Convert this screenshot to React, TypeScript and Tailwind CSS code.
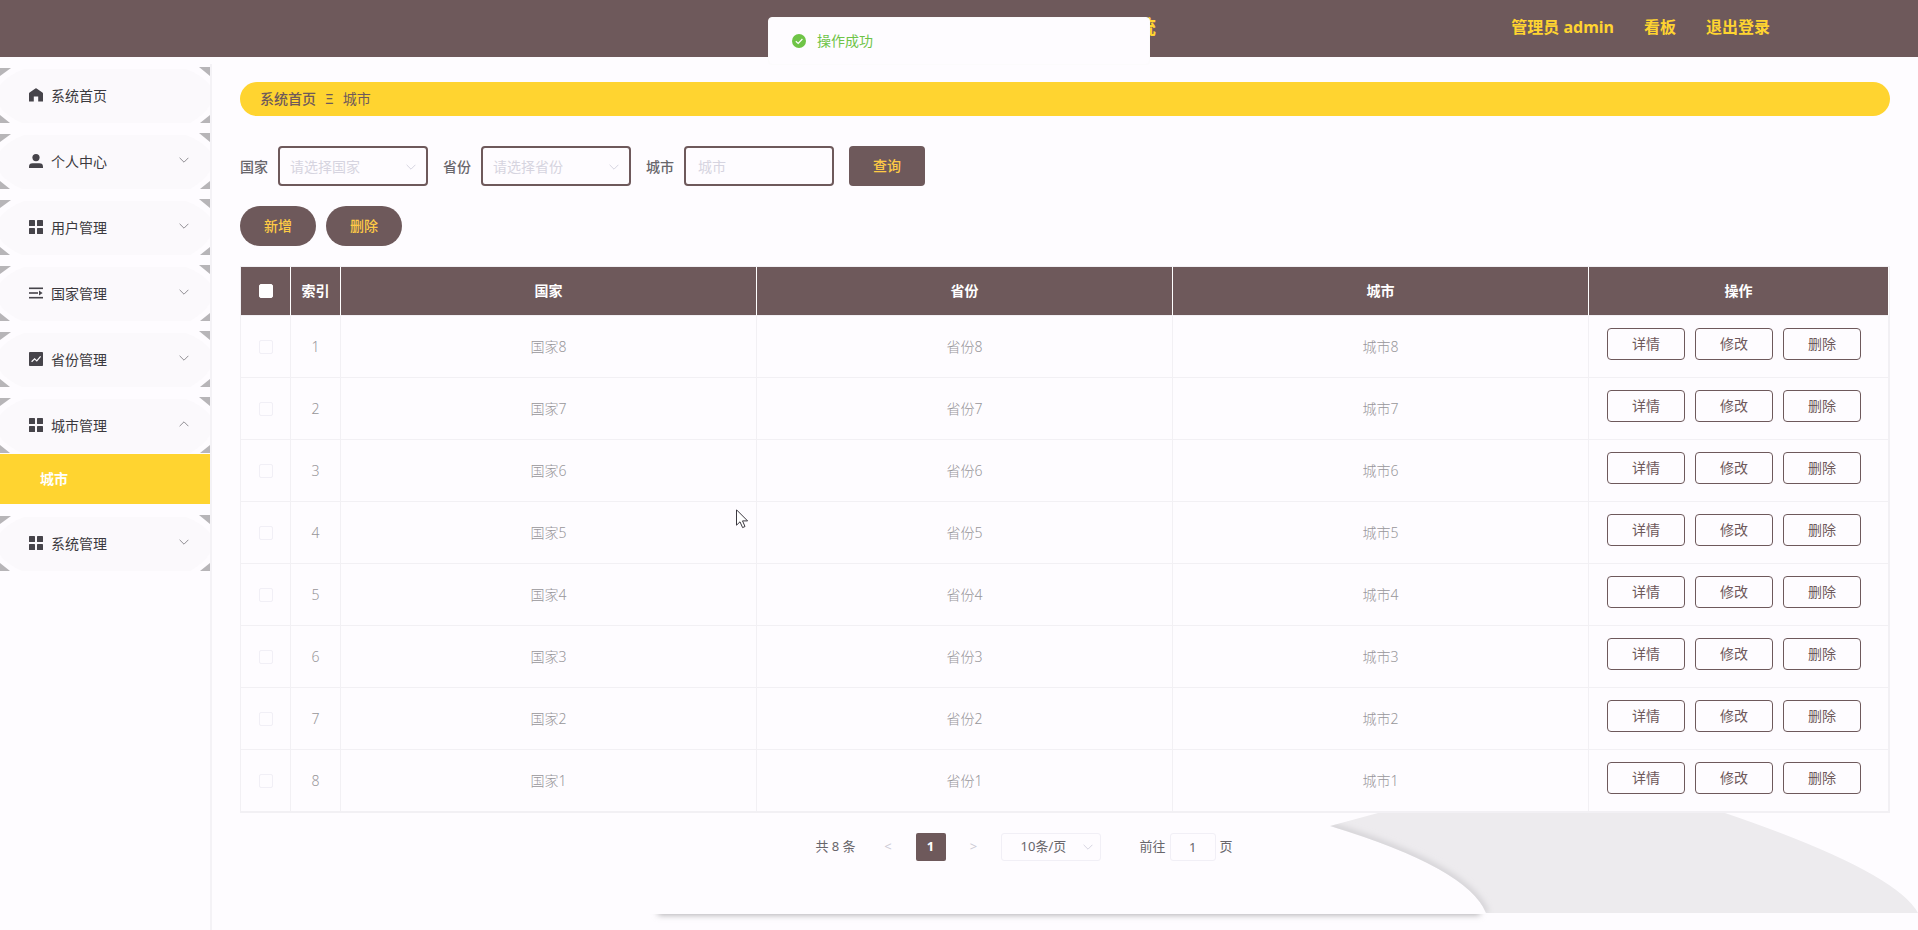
import React from "react";

const FONT = "font-['Noto_Sans','Noto_Sans_CJK_SC',sans-serif]";

type IconName = "home" | "user" | "grid" | "list" | "trend";

function MenuIcon({ name }: { name: IconName }) {
  return (
    <svg viewBox="0 0 14 14" className="size-[14px] shrink-0 fill-[#46444a]" aria-hidden="true">
      {name === "home" && (
        <path d="M6.4 .5Q7 .1 7.6 .5L13.4 4.5Q14 4.9 14 5.6V13.4H9.2V8.6H4.8V13.4H0V5.6Q0 4.9 .6 4.5Z" />
      )}
      {name === "user" && (
        <>
          <circle cx="7" cy="3.6" r="3.6" />
          <path d="M0 14V12.6Q0 9.2 3.6 9.2H10.4Q14 9.2 14 12.6V14Z" />
        </>
      )}
      {name === "grid" && (
        <>
          <rect x="0" y="0" width="6" height="6" rx=".6" />
          <rect x="8" y="0" width="6" height="6" rx=".6" />
          <rect x="0" y="8" width="6" height="6" rx=".6" />
          <rect x="8" y="8" width="6" height="6" rx=".6" />
        </>
      )}
      {name === "list" && (
        <>
          <rect x="0" y="1.5" width="14" height="1.6" />
          <rect x="0" y="6.2" width="9" height="1.6" />
          <path d="M10 4.4L13.6 7L10 9.6Z" />
          <rect x="0" y="10.9" width="14" height="1.6" />
        </>
      )}
      {name === "trend" && (
        <>
          <rect width="14" height="14" rx=".8" />
          <path d="M2.6 9.8L5.6 6.9L7.8 8.9L11.6 4.4" fill="none" stroke="#fefcff" strokeWidth="1.2" />
        </>
      )}
    </svg>
  );
}

function Chevron({ up = false, className = "" }: { up?: boolean; className?: string }) {
  return (
    <svg viewBox="0 0 10 6" className={`h-[6px] w-[10px] shrink-0 fill-none ${className}`} aria-hidden="true">
      <path d={up ? "M.6 5.2L5 .8L9.4 5.2" : "M.6 .8L5 5.2L9.4 .8"} stroke="currentColor" />
    </svg>
  );
}

interface MenuEntry {
  label: string;
  icon: IconName;
  arrow?: "down" | "up";
  child?: string;
}

const MENU: MenuEntry[] = [
  { label: "系统首页", icon: "home" },
  { label: "个人中心", icon: "user", arrow: "down" },
  { label: "用户管理", icon: "grid", arrow: "down" },
  { label: "国家管理", icon: "list", arrow: "down" },
  { label: "省份管理", icon: "trend", arrow: "down" },
  { label: "城市管理", icon: "grid", arrow: "up", child: "城市" },
  { label: "系统管理", icon: "grid", arrow: "down" },
];

function TileBackground() {
  return (
    <svg viewBox="0 0 210 56" preserveAspectRatio="none" className="absolute inset-0 size-full" aria-hidden="true">
      <path d="M24 2H186Q200 7 210 18V38Q204 48 190 56H22Q8 50 0 40V18Q10 7 24 2Z" fill="#fbf9fc" />
      <path d="M0 1H11L0 9ZM199 0H210V9ZM0 48L10 56H0ZM210 48V56H200Z" fill="#b7b5b8" />
    </svg>
  );
}

function Sidebar() {
  return (
    <nav className="mt-[7px] w-[212px] shrink-0 border-r-2 border-[#f4f2f6] pt-[3px]">
      <ul className="flex flex-col gap-[10px]">
        {MENU.map((m) => (
          <li key={m.label} className="flow-root">
            <button type="button" className="relative flex h-[56px] w-full items-center text-left text-[14px] text-[#3b393e]">
              <TileBackground />
              <span className="relative flex w-full items-center gap-[8px] pr-[21px] pl-[29px]">
                <MenuIcon name={m.icon} />
                <span className="flex-1">{m.label}</span>
                {m.arrow && <Chevron up={m.arrow === "up"} className="mb-[2px] text-[#908e93]" />}
              </span>
            </button>
            {m.child && (
              <a href="#city" className="my-px flex h-[50px] items-center bg-[#ffd430] pb-px pl-[40px] text-[14px] font-bold text-white">
                {m.child}
              </a>
            )}
          </li>
        ))}
      </ul>
    </nav>
  );
}

function Header() {
  return (
    <header className="grid h-[57px] grid-cols-[1fr_394px_1fr] bg-[#6e595b] pt-[12px] font-bold text-[#ffd430]">
      <div />
      <h1 className="pt-px text-right text-[20px] leading-[30px]">系统</h1>
      <div className="flex justify-end gap-[30px] pr-[148px] text-[16px] leading-[30px]">
        <span>管理员 admin</span>
        <a href="#board">看板</a>
        <a href="#logout">退出登录</a>
      </div>
    </header>
  );
}

function Toast() {
  return (
    <div
      role="status"
      className="absolute inset-x-0 top-[17px] z-10 mx-auto flex h-[48px] w-[382px] items-center gap-[11px] rounded border border-[#fcfbfc] bg-[#fefcff] pb-px pl-[23px] text-[14px] text-[#6fc447]"
    >
      <svg viewBox="0 0 14 14" className="size-[14px]" aria-hidden="true">
        <circle cx="7" cy="7" r="7" fill="#6fc447" />
        <path d="M3.8 7.2L6.2 9.4L10.4 5" fill="none" stroke="#fff" strokeWidth="1.2" />
      </svg>
      操作成功
    </div>
  );
}

function SelectField({ id, label, placeholder }: { id: string; label: string; placeholder: string }) {
  return (
    <div className="flex items-center gap-[10px]">
      <label htmlFor={id} className="font-medium">{label}</label>
      <div className="relative">
        <select
          id={id}
          defaultValue=""
          className="h-[40px] w-[150px] appearance-none rounded border-2 border-[#6e595b] bg-[#fefcff] pl-[10px] text-[#d6d4e0]"
        >
          <option value="">{placeholder}</option>
        </select>
        <Chevron className="pointer-events-none absolute top-[18px] right-[12px] text-[#d6d4e0]" />
      </div>
    </div>
  );
}

function Filters() {
  return (
    <form className="mt-[30px] flex items-center gap-[15px] text-[14px] text-[#68666b]">
      <SelectField id="country" label="国家" placeholder="请选择国家" />
      <SelectField id="province" label="省份" placeholder="请选择省份" />
      <div className="flex items-center gap-[10px]">
        <label htmlFor="city" className="font-medium">城市</label>
        <input
          id="city"
          placeholder="城市"
          className="h-[40px] w-[150px] rounded border-2 border-[#6e595b] bg-[#fefcff] px-[12px] placeholder:text-[#d6d4e0]"
        />
      </div>
      <button type="button" className="h-[40px] w-[76px] rounded bg-[#6e595b] pb-[2px] font-medium text-[#ffcb45]">查询</button>
    </form>
  );
}

const ROWS = [8, 7, 6, 5, 4, 3, 2, 1];
const ACTIONS = ["详情", "修改", "删除"];
const CHECK = "block size-[14px] mx-auto appearance-none rounded-[2px] border";

function CityTable() {
  const th = "h-[49px] border-r border-b border-r-white border-b-[#f2f0f4] bg-[#6e595b] p-0 pb-px font-bold text-white";
  const td = "border-r border-b border-[#f2f0f4] p-0 text-center";
  return (
    <div className="mt-[20px] border border-[#f2f0f4] bg-[#fefcff]">
      <table className="w-full table-fixed border-separate border-spacing-0 text-[14px] text-[#98969a]">
        <colgroup>
          <col className="w-[50px]" />
          <col className="w-[50px]" />
          <col />
          <col />
          <col />
          <col className="w-[300px]" />
        </colgroup>
        <thead>
          <tr>
            <th className={th}>
              <input type="checkbox" aria-label="全选" className={`${CHECK} border-white bg-white`} />
            </th>
            <th className={th}>索引</th>
            <th className={th}>国家</th>
            <th className={th}>省份</th>
            <th className={th}>城市</th>
            <th className={th}>操作</th>
          </tr>
        </thead>
        <tbody className="font-light">
          {ROWS.map((n, i) => (
            <tr key={n}>
              <td className={td}>
                <input type="checkbox" aria-label={`选择第${i + 1}行`} className={`${CHECK} border-[#f1eff6]`} />
              </td>
              <td className={td}>{i + 1}</td>
              <td className={td}>国家{n}</td>
              <td className={td}>省份{n}</td>
              <td className={td}>城市{n}</td>
              <td className={td}>
                <div className="flex gap-[10px] pt-[12px] pb-[17px] pl-[18px]">
                  {ACTIONS.map((a) => (
                    <button key={a} type="button" className="h-[32px] w-[78px] rounded border border-[#6e595b] pb-px font-normal text-[#6e595b]">
                      {a}
                    </button>
                  ))}
                </div>
              </td>
            </tr>
          ))}
        </tbody>
      </table>
    </div>
  );
}

function Swoosh() {
  return (
    <svg viewBox="0 0 1268 112" className="pointer-events-none absolute top-0 right-0 h-[112px] w-[1268px]" aria-hidden="true">
      <defs>
        <filter id="soft" x="-5%" y="-100%" width="110%" height="300%">
          <feGaussianBlur stdDeviation="3" />
        </filter>
        <clipPath id="swooshClip">
          <path d="M680 13L728 0H1075Q1245 58 1268 100H836Q818 55 680 13Z" />
        </clipPath>
        <clipPath id="edgeClip">
          <rect x="0" y="101" width="840" height="11" />
        </clipPath>
      </defs>
      <path d="M680 13L728 0H1075Q1245 58 1268 100H836Q818 55 680 13Z" fill="#edebee" />
      <g clipPath="url(#swooshClip)">
        <path d="M680 13Q818 55 836 100" fill="none" stroke="#cfcdd1" strokeWidth="6" filter="url(#soft)" />
      </g>
      <g clipPath="url(#edgeClip)">
        <rect x="8" y="94" width="822" height="8" fill="#adabaf" filter="url(#soft)" />
      </g>
    </svg>
  );
}

function Pager() {
  return (
    <div className="relative -mr-[28px] h-[117px]">
      <Swoosh />
      <div className="relative flex items-center justify-center pt-[20px] pr-[110px] text-[13px] text-[#68666b]">
        <span>共 8 条</span>
        <button type="button" aria-label="上一页" className="ml-[18px] w-[30px] pr-px text-[#cccad4]">&lt;</button>
        <button type="button" className="ml-[12px] h-[28px] w-[30px] rounded-[2px] bg-[#6e595b] font-bold text-white">1</button>
        <button type="button" aria-label="下一页" className="ml-[13px] w-[30px] text-[#cccad4]">&gt;</button>
        <div className="relative ml-[12px]">
          <select aria-label="每页条数" className="block h-[28px] w-[100px] appearance-none rounded-[3px] border border-[#f1eff6] bg-[#fefcff] pl-[19px]">
            <option>10条/页</option>
          </select>
          <Chevron className="pointer-events-none absolute top-[11px] right-[8px] text-[#d6d4e0]" />
        </div>
        <label htmlFor="page" className="ml-[39px]">前往</label>
        <input id="page" defaultValue="1" className="ml-[4px] h-[28px] w-[46px] rounded-[3px] border border-[#f1eff6] bg-[#fefcff] text-center" />
        <span className="ml-[4px]">页</span>
      </div>
    </div>
  );
}

export default function App() {
  const pill = "h-[40px] w-[76px] rounded-full bg-[#6e595b] pb-[2px] text-[14px] font-medium text-[#ffcb45]";
  return (
    <div className={`relative flex min-h-screen flex-col overflow-hidden bg-[#fefcff] ${FONT}`}>
      <Header />
      <Toast />
      <div className="flex flex-1">
        <Sidebar />
        <main className="min-w-0 flex-1 pt-[25px] pr-[28px] pl-[28px]">
          <div className="flex h-[34px] items-center gap-[9px] rounded-full bg-[#ffd430] pb-px pl-[20px] text-[14px] text-[#6e595b]">
            <a href="#home" className="font-medium">系统首页</a>
            <span>Ξ</span>
            <span>城市</span>
          </div>
          <Filters />
          <div className="mt-[20px] flex gap-[10px]">
            <button type="button" className={pill}>新增</button>
            <button type="button" className={pill}>删除</button>
          </div>
          <CityTable />
          <Pager />
        </main>
      </div>
      <svg viewBox="0 0 13 20" className="absolute top-[509px] left-[736px] h-[20px] w-[13px]" aria-hidden="true">
        <path d="M.5 .8V16.2L4 12.8L6.6 18.6L9 17.5L6.5 11.9H11.6Z" fill="#fff" stroke="#3c3840" />
      </svg>
    </div>
  );
}
